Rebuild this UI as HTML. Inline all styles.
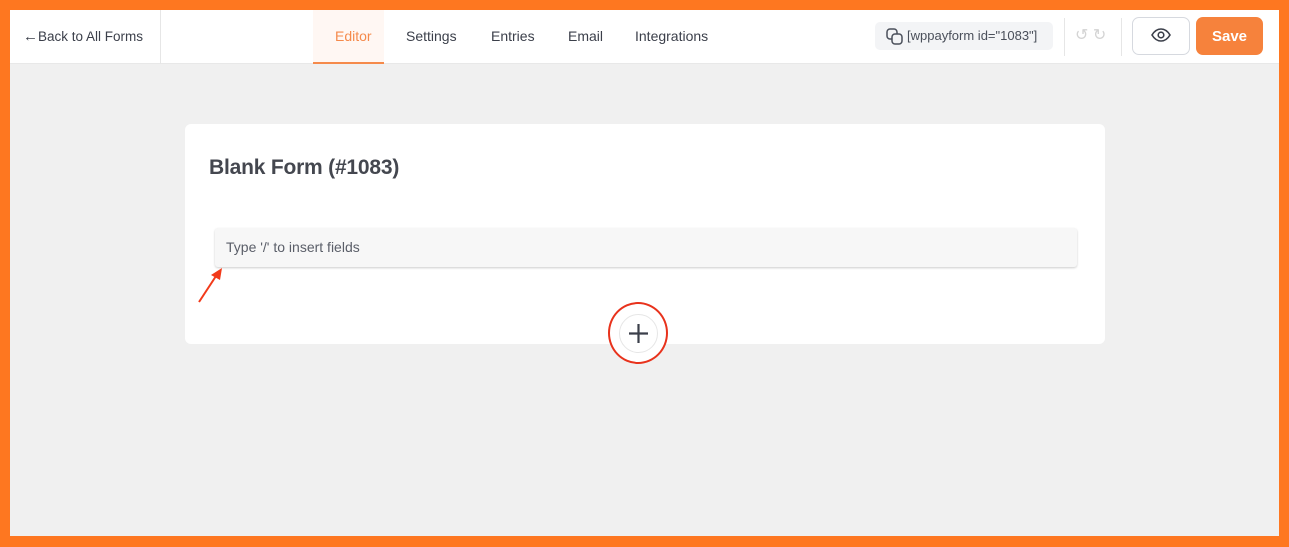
<!DOCTYPE html>
<html><head><style>
*{box-sizing:border-box;margin:0;padding:0}
body{width:1289px;height:547px;background:#fe7720;position:relative;font-family:"Liberation Sans",sans-serif;overflow:hidden}
#app{position:absolute;left:10px;top:10px;width:1269px;height:526px;background:#f0f0f0}
#hdr{position:absolute;left:0;top:0;width:1269px;height:54px;background:#fff;border-bottom:1px solid #e8e8e8}
.t{position:absolute;font-size:14px;color:#3b3f4a;top:18px}
</style></head><body>
<div id="app">
<div id="hdr">
 <div class="t" style="left:13px;font-size:13.5px"><span style="font-size:15px">←</span>Back to All Forms</div>
 <div style="position:absolute;left:150px;top:0;width:1px;height:54px;background:#e6e6e6"></div>
 <div style="position:absolute;left:303px;top:0;width:71px;height:54px;background:#fff7f3;border-bottom:2px solid #f58a4b"></div>
 <div class="t" style="left:325px;color:#f58a4b">Editor</div>
 <div class="t" style="left:396px">Settings</div>
 <div class="t" style="left:481px">Entries</div>
 <div class="t" style="left:558px">Email</div>
 <div class="t" style="left:625px">Integrations</div>
 <div style="position:absolute;left:865px;top:12px;width:178px;height:28px;background:#f3f4f6;border-radius:5px"></div>
 <svg style="position:absolute;left:876px;top:18px" width="17" height="17" viewBox="0 0 17 17" fill="none" stroke="#4a4f5a" stroke-width="1.5"><rect x="1" y="1" width="10" height="10" rx="3"/><rect x="6" y="6" width="10" height="10" rx="3" fill="#f3f4f6"/></svg>
 <div class="t" style="left:897px;top:18px;font-size:13px;color:#4a4f5a">[wppayform id="1083"]</div>
 <div style="position:absolute;left:1054px;top:8px;width:1px;height:38px;background:#e6e6e6"></div>
 <div class="t" style="left:1065px;top:15px;font-size:16px;color:#d4d4d4">↺ ↻</div>
 <div style="position:absolute;left:1111px;top:8px;width:1px;height:38px;background:#e6e6e6"></div>
 <div style="position:absolute;left:1122px;top:7px;width:58px;height:38px;border:1px solid #d6d9df;border-radius:7px"></div>
 <svg style="position:absolute;left:1141px;top:18px" width="20" height="14" viewBox="0 0 20 14" fill="none" stroke="#3b3f4a" stroke-width="1.6"><path d="M1 7C4 2 7 1 10 1s6 1 9 6c-3 5-6 6-9 6S4 12 1 7z"/><circle cx="10" cy="7" r="2.8"/></svg>
 <div style="position:absolute;left:1186px;top:7px;width:67px;height:38px;background:#f6823c;border-radius:7px;color:#fff;font-weight:bold;font-size:15px;text-align:center;line-height:39px">Save</div>
</div>
<div style="position:absolute;left:175px;top:114px;width:920px;height:220px;background:#fff;border-radius:6px"></div>
<div style="position:absolute;left:199px;top:146px;font-size:21px;font-weight:bold;color:#44474f;letter-spacing:-0.2px">Blank Form (#1083)</div>
<div style="position:absolute;left:205px;top:218px;width:862px;height:39px;background:#f7f7f7;border-radius:3px;box-shadow:0 1px 2px rgba(0,0,0,.2);font-size:14px;color:#5a5e68;padding:11px 11px">Type '/' to insert fields</div>
<svg style="position:absolute;left:186px;top:255px" width="30" height="40"><path d="M3 37L22 8" stroke="#f23a1a" stroke-width="2"/><path d="M26 3L15 10L24 15z" fill="#f23a1a"/></svg>
<div style="position:absolute;left:598px;top:292px;width:60px;height:62px;border:2px solid #e8321c;border-radius:50%;background:#fff"></div>
<div style="position:absolute;left:609px;top:304px;width:39px;height:39px;border:1px solid #e6e6e6;border-radius:50%;background:#fff"></div>
<svg style="position:absolute;left:617px;top:312px" width="23" height="23"><path d="M11.5 2v19M2 11.5h19" stroke="#3b3f4a" stroke-width="2.2"/></svg>
</div>
</body></html>
